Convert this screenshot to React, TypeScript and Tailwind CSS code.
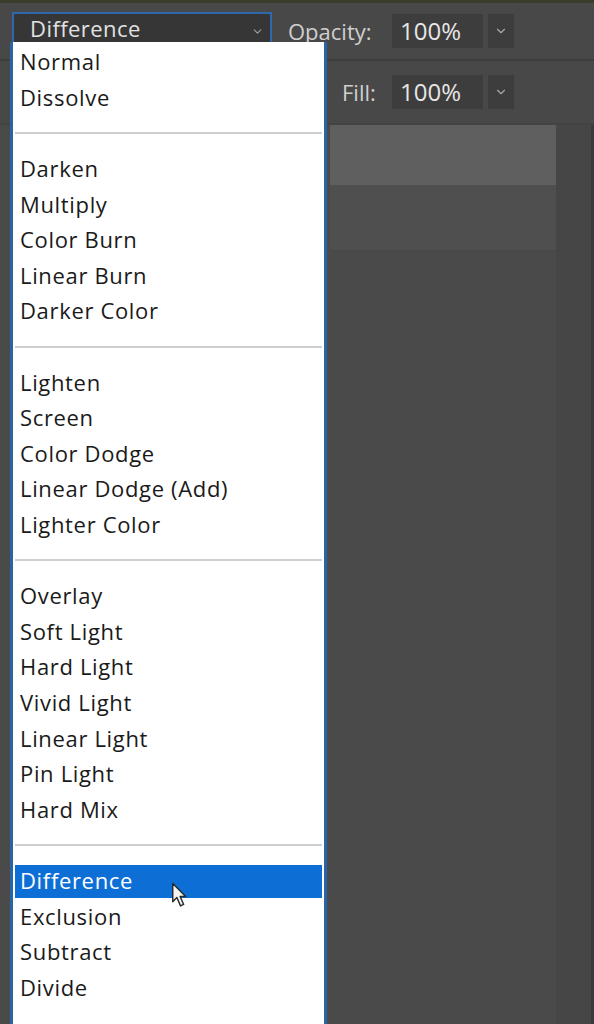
import { ChevronDown } from 'lucide-react';

const font = { fontFamily: '"Open Sans", "Noto Sans", sans-serif' };

type Row = { label: string } | { sep: true };

const groups: string[][] = [
  ['Normal', 'Dissolve'],
  ['Darken', 'Multiply', 'Color Burn', 'Linear Burn', 'Darker Color'],
  ['Lighten', 'Screen', 'Color Dodge', 'Linear Dodge (Add)', 'Lighter Color'],
  ['Overlay', 'Soft Light', 'Hard Light', 'Vivid Light', 'Linear Light', 'Pin Light', 'Hard Mix'],
  ['Difference', 'Exclusion', 'Subtract', 'Divide'],
];

const rows: Row[] = groups.flatMap((g, i) => {
  const items: Row[] = g.map((label) => ({ label }));
  return i < groups.length - 1 ? [...items, { sep: true as const }] : items;
});

function PercentField({ value }: { value: string }) {
  return (
    <div className="flex items-stretch gap-[5px] h-[34px]">
      <div className="w-[91px] bg-[#3d3d3d] flex items-center pl-[8px] text-[24px] font-medium text-[#e6e6e6]">{value}</div>
      <div className="w-[26px] bg-[#3d3d3d] flex items-center justify-center">
        <ChevronDown size={14} strokeWidth={2} className="text-[#a8a8a8]" />
      </div>
    </div>
  );
}

function Cursor() {
  return (
    <svg width="17" height="27" viewBox="0 0 16 26" className="absolute left-[156px] top-[19px]">
      <path d="M1.5 1.5 L1.5 19 L5.5 15 L9 23 L12 21.6 L8.6 14 L14 14 Z" fill="#f4f4f4" stroke="#2a2a2a" strokeWidth="1.4" strokeLinejoin="round" />
    </svg>
  );
}

export default function App() {
  return (
    <div className="relative w-[594px] h-[1024px] overflow-hidden bg-[#4a4a4a] border-t-[3px] border-[#3b3c2e]" style={font}>
      <div className="flex h-[58px] items-center gap-[10px] pl-[12px] border-b-2 border-[#3e3e3e] bg-[#484848]">
        <div className="w-[260px] h-[32px] -mt-[6px] bg-[#363636] border-2 border-[#2f68ad] flex items-center justify-between pl-[16px] pr-[6px]">
          <span className="text-[22px] font-medium tracking-[0.02em] text-[#e2e2e2] leading-none">Difference</span>
          <ChevronDown size={13} strokeWidth={2} className="text-[#a0a0a0] mt-[6px]" />
        </div>
        <span className="ml-[6px] w-[94px] text-[22px] font-medium text-[#cfcfcf]">Opacity:</span>
        <PercentField value="100%" />
      </div>
      <div className="flex h-[64px] items-center gap-[10px] pl-[342px] border-b-2 border-[#434343] bg-[#484848]">
        <span className="w-[40px] text-[22px] font-medium text-[#cfcfcf]">Fill:</span>
        <PercentField value="100%" />
      </div>
      <div className="flex h-[900px]">
        <div className="w-[330px]" />
        <div className="flex flex-col w-[226px]">
          <div className="h-[60px] bg-[#5f5f5f]" />
          <div className="h-[66px] bg-[#4f4f4f] border-b border-[#474747]" />
        </div>
        <div className="flex-1 bg-[#464646] border-r-[3px] border-[#3a3a3a]" />
      </div>

      <div className="absolute left-[10px] top-[39px] w-[317px] h-[1000px] bg-white border-x-[3px] border-[#2a64a8] pt-[2px] px-[2px]">
        {rows.map((r, i) =>
          'sep' in r ? (
            <div key={i} className="h-[35.6px] flex items-center">
              <div className="h-[2px] w-full bg-[#cfcfcf]" />
            </div>
          ) : r.label === 'Difference' ? (
            <div key={i} className="relative h-[35.6px] flex items-center">
              <div className="absolute inset-x-0 top-[2px] h-[33px] bg-[#0d6fd6]" />
              <span className="relative pl-[5px] text-[22px] font-medium tracking-[0.03em] text-white">{r.label}</span>
              <Cursor />
            </div>
          ) : (
            <div key={i} className="h-[35.6px] flex items-center pl-[5px] text-[22px] font-medium tracking-[0.03em] text-[#1a1a1a]">
              {r.label}
            </div>
          )
        )}
      </div>
    </div>
  );
}
